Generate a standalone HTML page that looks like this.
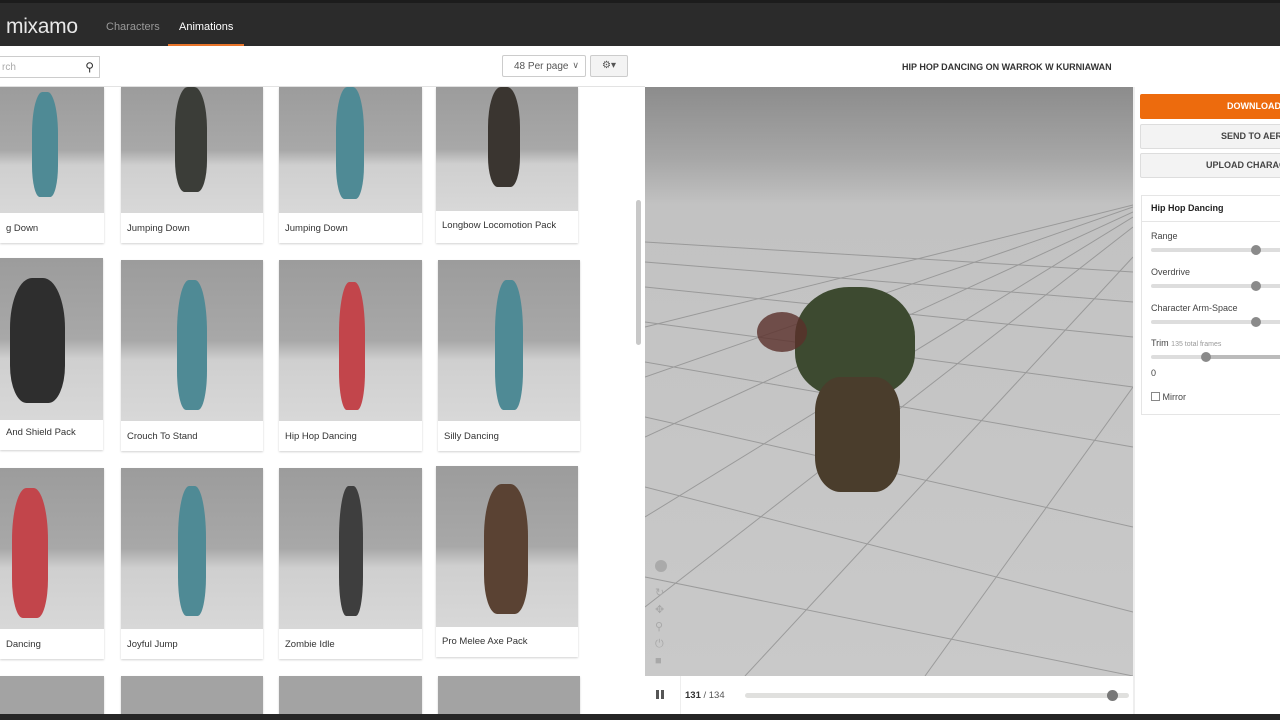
<!DOCTYPE html>
<html><head><meta charset="utf-8"><style>
*{margin:0;padding:0;box-sizing:border-box}
body{width:1280px;height:720px;overflow:hidden;background:#fff;font-family:"Liberation Sans",sans-serif;position:relative}
.top{position:absolute;left:0;top:0;width:1280px;height:46px;background:#2b2b2b;border-top:3px solid #1c1c1c}
.logo{position:absolute;left:6px;top:12px;color:#e8e8e8;font-size:21px;letter-spacing:-0.3px}
.nav{position:absolute;top:18px;font-size:11px;color:#999}
.tab{position:absolute;left:168px;top:41px;width:76px;height:3px;background:#e8742a}
.left{position:absolute;left:0;top:46px;width:645px;height:668px;background:#fff}
.tool{position:absolute;left:0;top:46px;width:645px;height:41px;background:#fff;border-bottom:1px solid #e3e3e3}
.search{position:absolute;left:-2px;top:10px;width:102px;height:22px;border:1px solid #ccc;background:#fff;font-size:10px;color:#aaa;padding:5px 3px}
.sel{position:absolute;left:502px;top:9px;width:84px;height:22px;border:1px solid #ccc;font-size:10px;color:#555;padding:5px 0 0 11px;border-radius:2px;white-space:nowrap}
.gear{position:absolute;left:590px;top:9px;width:38px;height:22px;border:1px solid #ccc;background:#f3f3f3;font-size:10px;color:#555;text-align:center;line-height:20px;border-radius:2px}
.card{position:absolute;background:#fff;box-shadow:0 1px 2px rgba(0,0,0,.18)}
.img{position:absolute;left:0;top:0;right:0;background:linear-gradient(#9c9c9c 0,#a8a8a8 50%,#cfcfcf 62%,#d8d8d8 100%);overflow:hidden}
.cap{position:absolute;left:6px;bottom:9px;font-size:9.5px;color:#333}
.fig{position:absolute;border-radius:40% 40% 30% 30%}
.viewer{position:absolute;left:645px;top:87px;width:488px;height:589px;background:linear-gradient(#8c8c8c 0,#a6a6a6 12%,#c2c2c2 20%,#c9c9c9 100%);overflow:hidden}
.vh{position:absolute;left:645px;top:46px;width:635px;height:41px;background:#fff;font-size:9px;font-weight:bold;color:#333;padding:16px 0 0 257px}
.right{position:absolute;left:1133px;top:87px;width:147px;height:627px;background:#fff;overflow:hidden}
.btn{position:absolute;left:7px;width:145px;height:25px;font-size:9px;font-weight:bold;line-height:23px;border-radius:2px;white-space:nowrap;overflow:hidden;text-align:left}
.panel{position:absolute;left:8px;top:108px;width:145px;height:220px;border:1px solid #e5e5e5}
.lbl{position:absolute;left:9px;font-size:9px;color:#444;white-space:nowrap}
.track{position:absolute;left:9px;width:140px;height:4px;background:#ddd;border-radius:2px}
.knob{position:absolute;width:10px;height:10px;border-radius:50%;background:#8a8a8a;top:-3px}
.bot{position:absolute;left:645px;top:676px;width:488px;height:38px;background:#fff}
.dark{position:absolute;left:0;top:714px;width:1280px;height:6px;background:#262626}
</style></head><body>
<div class="top">
<div class="logo">mixamo</div>
<div class="nav" style="left:106px;top:18px">Characters</div>
<div class="nav" style="left:179px;top:18px;color:#fff">Animations</div>
<div class="tab"></div>
</div>
<div class="left">
<div style="position:absolute;left:636px;top:154px;width:5px;height:145px;background:#c8c8c8;border-radius:3px"></div>
</div>
<div class="tool">
<div class="search">rch<span style="position:absolute;right:5px;top:3px;color:#333;font-size:12px">⚲</span></div>
<div class="sel">48 Per page<span style="position:absolute;right:6px;top:4px;color:#666;font-size:9px">&#x2228;</span></div>
<div class="gear">⚙▾</div>
</div>

<div class="card" style="left:0;top:87px;width:104px;height:156px"><div class="img" style="height:126px"><div class="fig" style="left:32px;top:5px;width:26px;height:105px;background:#4f8a95"></div></div><div class="cap">g Down</div></div>
<div class="card" style="left:121px;top:87px;width:142px;height:156px"><div class="img" style="height:126px"><div class="fig" style="left:54px;top:0;width:32px;height:105px;background:#3b3d38"></div></div><div class="cap">Jumping Down</div></div>
<div class="card" style="left:279px;top:87px;width:143px;height:156px"><div class="img" style="height:126px"><div class="fig" style="left:57px;top:0;width:28px;height:112px;background:#4f8a95"></div></div><div class="cap">Jumping Down</div></div>
<div class="card" style="left:436px;top:87px;width:142px;height:156px"><div class="img" style="height:124px"><div class="fig" style="left:52px;top:0;width:32px;height:100px;background:#3a3530"></div></div><div class="cap" style="bottom:12px">Longbow Locomotion Pack</div></div>
<div class="card" style="left:0;top:258px;width:103px;height:192px"><div class="img" style="height:162px"><div class="fig" style="left:10px;top:20px;width:55px;height:125px;background:#2e2e2e"></div></div><div class="cap" style="bottom:12px">And Shield Pack</div></div>
<div class="card" style="left:121px;top:260px;width:142px;height:191px"><div class="img" style="height:161px"><div class="fig" style="left:56px;top:20px;width:30px;height:130px;background:#4f8a95"></div></div><div class="cap">Crouch To Stand</div></div>
<div class="card" style="left:279px;top:260px;width:143px;height:191px"><div class="img" style="height:161px"><div class="fig" style="left:60px;top:22px;width:26px;height:128px;background:#c2454b"></div></div><div class="cap">Hip Hop Dancing</div></div>
<div class="card" style="left:438px;top:260px;width:142px;height:191px"><div class="img" style="height:161px"><div class="fig" style="left:57px;top:20px;width:28px;height:130px;background:#4f8a95"></div></div><div class="cap">Silly Dancing</div></div>
<div class="card" style="left:0;top:468px;width:104px;height:191px"><div class="img" style="height:161px"><div class="fig" style="left:12px;top:20px;width:36px;height:130px;background:#c2454b"></div></div><div class="cap">Dancing</div></div>
<div class="card" style="left:121px;top:468px;width:142px;height:191px"><div class="img" style="height:161px"><div class="fig" style="left:57px;top:18px;width:28px;height:130px;background:#4f8a95"></div></div><div class="cap">Joyful Jump</div></div>
<div class="card" style="left:279px;top:468px;width:143px;height:191px"><div class="img" style="height:161px"><div class="fig" style="left:60px;top:18px;width:24px;height:130px;background:#3e3e3e"></div></div><div class="cap">Zombie Idle</div></div>
<div class="card" style="left:436px;top:466px;width:142px;height:191px"><div class="img" style="height:161px"><div class="fig" style="left:48px;top:18px;width:44px;height:130px;background:#5a4233"></div></div><div class="cap" style="bottom:10px">Pro Melee Axe Pack</div></div>
<div class="card" style="left:0;top:676px;width:104px;height:40px"><div class="img" style="height:40px;background:#a3a3a3"></div></div>
<div class="card" style="left:121px;top:676px;width:142px;height:40px"><div class="img" style="height:40px;background:#a3a3a3"></div></div>
<div class="card" style="left:279px;top:676px;width:143px;height:40px"><div class="img" style="height:40px;background:#a3a3a3"></div></div>
<div class="card" style="left:438px;top:676px;width:142px;height:40px"><div class="img" style="height:40px;background:#a3a3a3"></div></div>

<div class="vh">HIP HOP DANCING ON WARROK W KURNIAWAN</div>
<div class="viewer">
<svg width="488" height="589" style="position:absolute;left:0;top:0" stroke="#888" stroke-width="1" fill="none">
<g opacity=".7">
<line x1="0" y1="520" x2="488" y2="140"/><line x1="0" y1="430" x2="488" y2="130"/><line x1="0" y1="350" x2="488" y2="125"/>
<line x1="0" y1="290" x2="488" y2="120"/><line x1="0" y1="240" x2="488" y2="118"/>
<line x1="100" y1="589" x2="488" y2="170"/><line x1="280" y1="589" x2="488" y2="300"/>
<line x1="0" y1="490" x2="488" y2="589"/><line x1="0" y1="400" x2="488" y2="525"/><line x1="0" y1="330" x2="488" y2="440"/><line x1="0" y1="275" x2="488" y2="360"/><line x1="0" y1="235" x2="488" y2="300"/><line x1="0" y1="200" x2="488" y2="250"/><line x1="0" y1="175" x2="488" y2="215"/><line x1="0" y1="155" x2="488" y2="185"/>
</g></svg>
<div style="position:absolute;left:150px;top:200px;width:120px;height:110px;background:#3d4a30;border-radius:45% 45% 40% 40%"></div>
<div style="position:absolute;left:112px;top:225px;width:50px;height:40px;background:#5a2f2a;border-radius:50%;opacity:.8"></div>
<div style="position:absolute;left:170px;top:290px;width:85px;height:115px;background:#4a3d2c;border-radius:30%"></div>
<div style="position:absolute;left:10px;top:473px;width:12px;height:12px;border-radius:50%;background:#aaa"></div>
<div style="position:absolute;left:10px;top:498px;color:#a8a8a8;font-size:11px;line-height:17px">↻<br>✥<br>⚲<br>⏻<br>■</div>
</div>
<div class="right">
<div style="position:absolute;left:0;top:0;width:2px;height:627px;background:#eee"></div>
<div class="btn" style="top:7px;background:#ed6b0d;color:#fff;padding-left:87px;line-height:25px">DOWNLOAD</div>
<div class="btn" style="top:37px;background:#f3f3f3;border:1px solid #ddd;color:#444;padding-left:80px">SEND TO AERO</div>
<div class="btn" style="top:66px;background:#f3f3f3;border:1px solid #ddd;color:#444;padding-left:65px">UPLOAD CHARACTER</div>
<div class="panel">
<div style="position:absolute;left:9px;top:7px;font-size:9px;font-weight:bold;color:#222">Hip Hop Dancing</div>
<div style="position:absolute;left:0;top:25px;width:145px;height:1px;background:#e5e5e5"></div>
<div class="lbl" style="top:35px">Range</div><div class="track" style="top:52px"><div class="knob" style="left:100px"></div></div>
<div class="lbl" style="top:71px">Overdrive</div><div class="track" style="top:88px"><div class="knob" style="left:100px"></div></div>
<div class="lbl" style="top:107px">Character Arm-Space</div><div class="track" style="top:124px"><div class="knob" style="left:100px"></div></div>
<div class="lbl" style="top:142px">Trim <span style="font-size:7px;color:#999">135 total frames</span></div><div class="track" style="top:159px;background:linear-gradient(90deg,#ddd 55px,#bbb 55px)"><div class="knob" style="left:50px"></div></div>
<div class="lbl" style="top:172px">0</div>
<div class="lbl" style="top:196px"><span style="display:inline-block;width:9px;height:9px;border:1px solid #888;vertical-align:-1px"></span> Mirror</div>
</div>
</div>
<div class="bot">
<div style="position:absolute;left:35px;top:0;width:1px;height:38px;background:#eee"></div>
<div style="position:absolute;left:11px;top:14px;width:3px;height:9px;background:#555;box-shadow:5px 0 #555"></div>
<div style="position:absolute;left:40px;top:14px;font-size:9.5px;color:#555"><b style="color:#333">131</b> / 134</div>
<div style="position:absolute;left:100px;top:17px;width:384px;height:5px;background:#e0e0de;border-radius:3px"><div style="position:absolute;left:362px;top:-3px;width:11px;height:11px;border-radius:50%;background:#777"></div></div>
</div>
<div class="dark"></div>
</body></html>
